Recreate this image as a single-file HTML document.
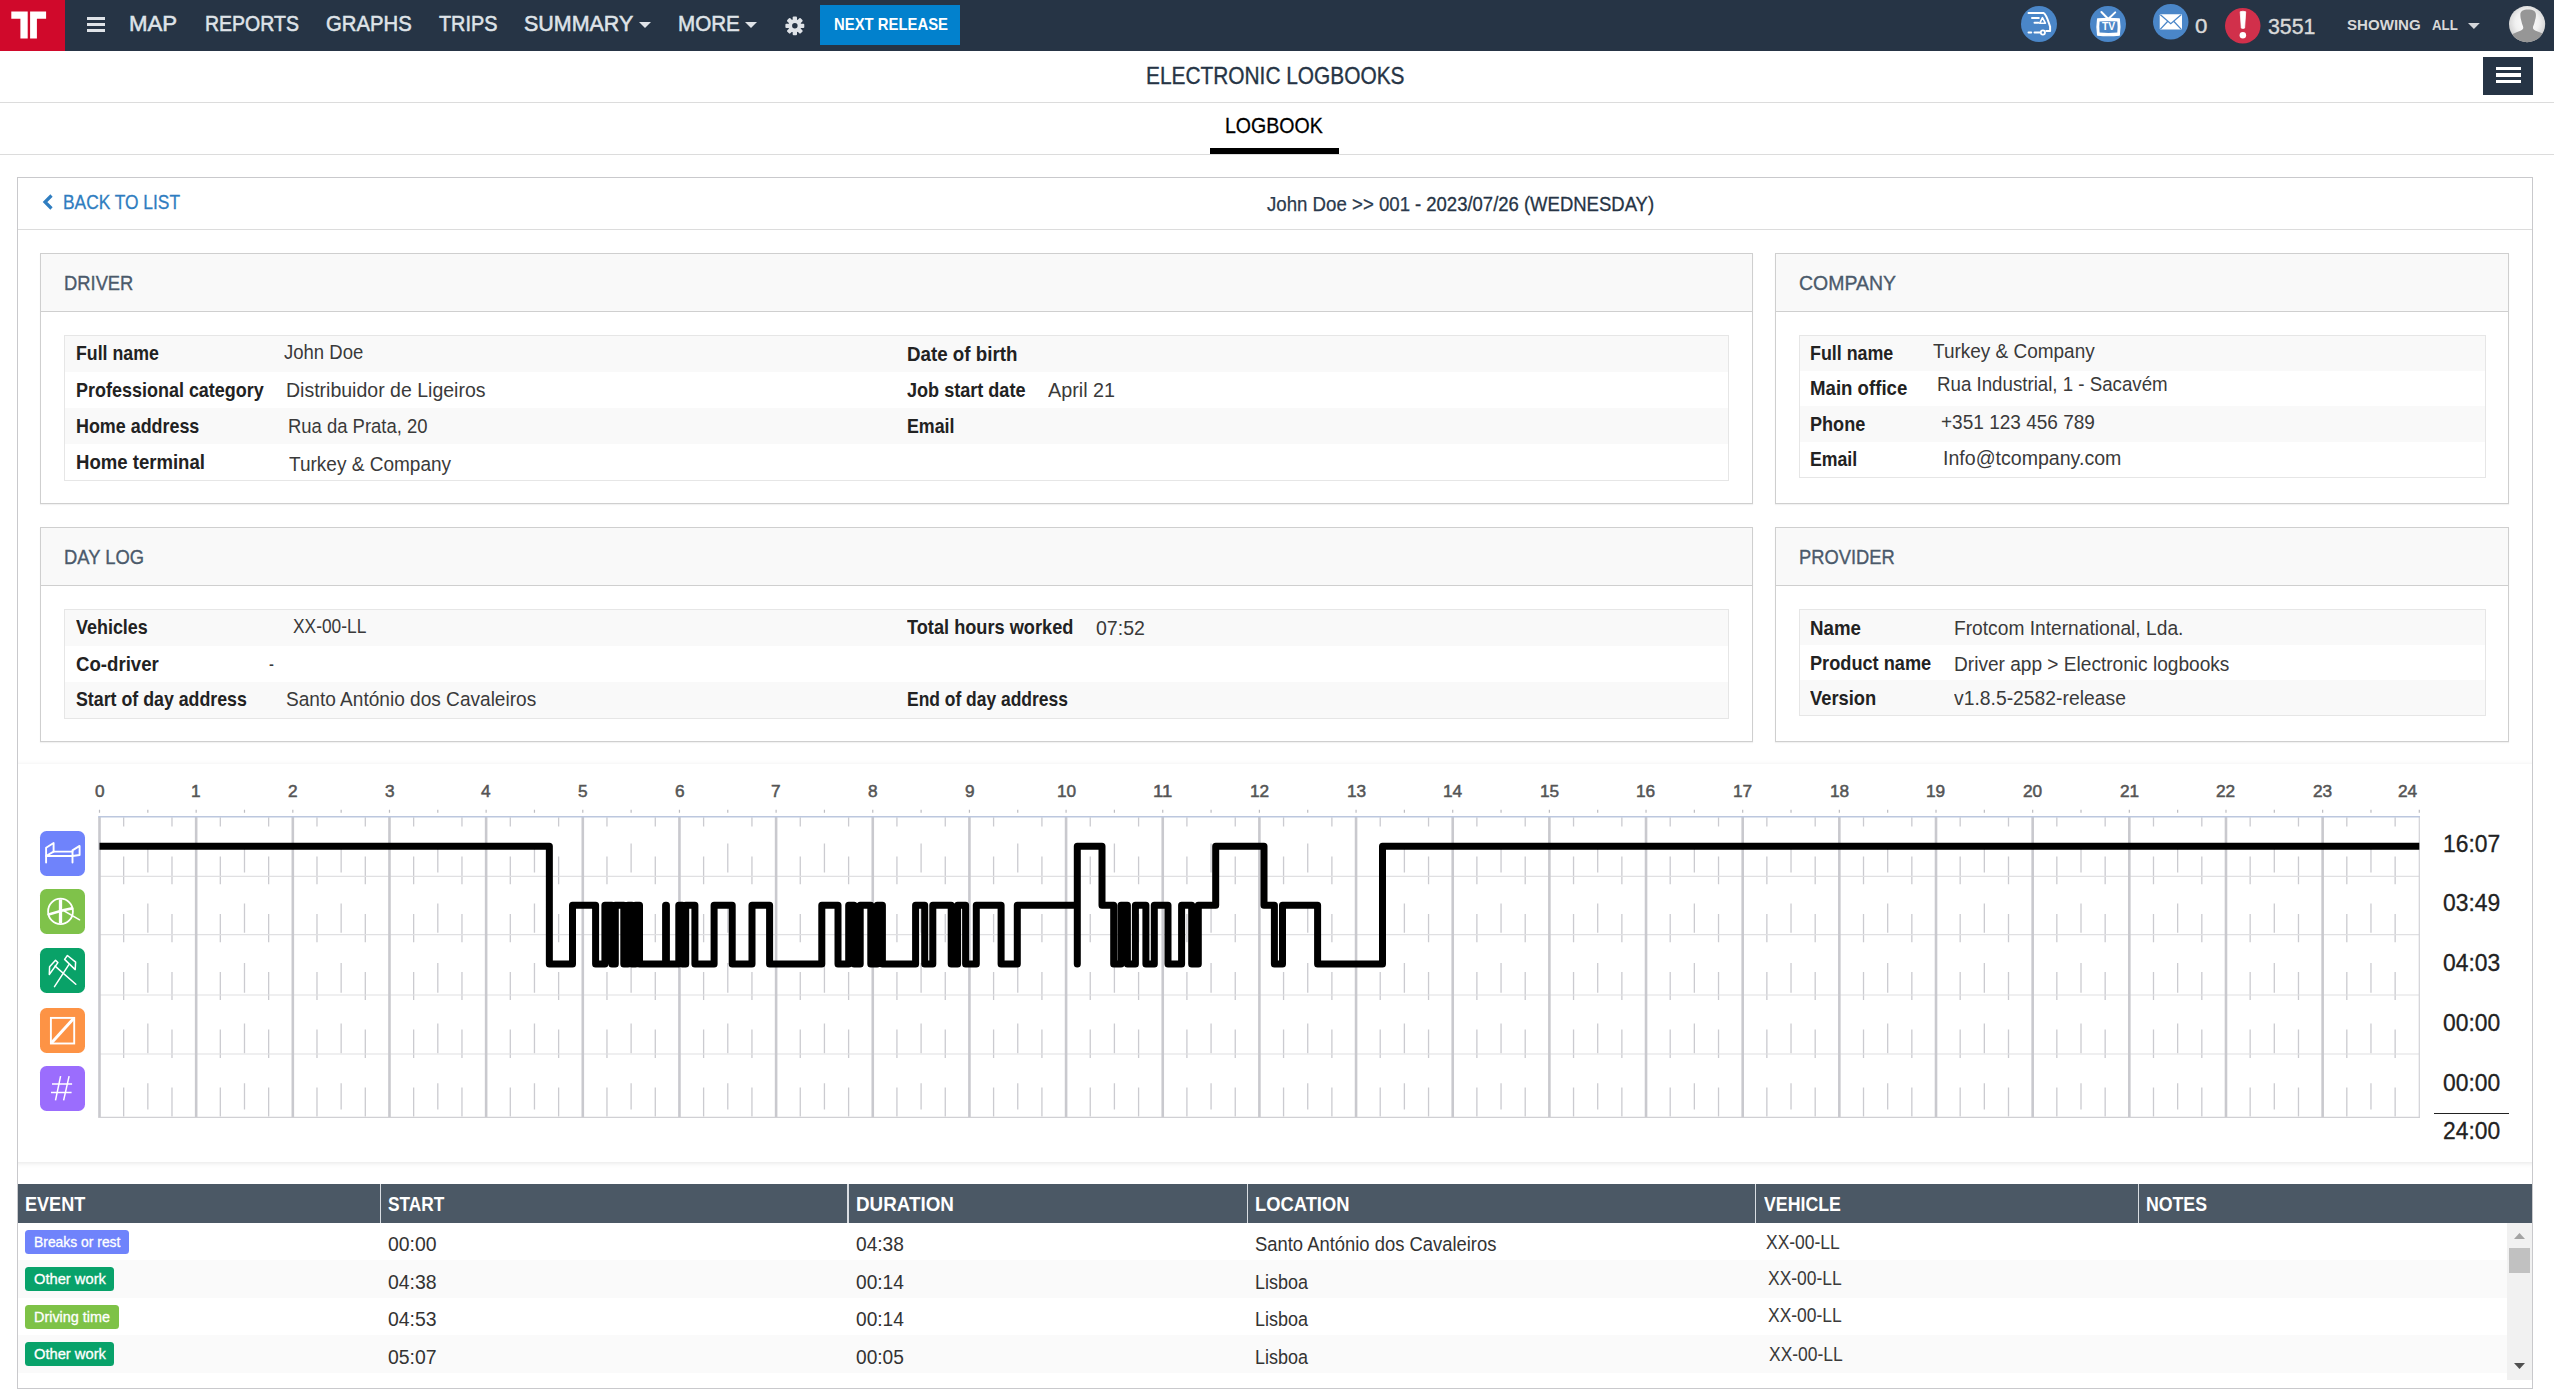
<!DOCTYPE html><html><head><meta charset="utf-8"><title>Electronic Logbooks</title><style>

html,body{margin:0;padding:0;background:#fff;}
body{width:2554px;height:1395px;position:relative;overflow:hidden;font-family:"Liberation Sans",sans-serif;}
.r{position:absolute;box-sizing:border-box;}
.t{position:absolute;white-space:pre;line-height:1;transform-origin:0 0;}
svg{position:absolute;overflow:visible;}

</style></head><body>
<div class="r" style="left:0px;top:0px;width:2554px;height:50.7px;background:#263445;"></div>
<div class="r" style="left:0px;top:0px;width:65.1px;height:50.7px;background:#d0092b;"></div>
<svg style="left:0;top:0" width="65" height="51" viewBox="0 0 65 51"><path d="M11.3 11.5H27.7V38.5H20.4V18.8H11.3ZM30.1 11.5H46.1V18.8H36.9V38.5H30.1Z" fill="#fff"/></svg>
<div class="r" style="left:86.7px;top:17.15px;width:18.6px;height:2.9px;background:#dfe3e8;"></div>
<div class="r" style="left:86.7px;top:23.0px;width:18.6px;height:2.9px;background:#dfe3e8;"></div>
<div class="r" style="left:86.7px;top:29.0px;width:18.6px;height:2.9px;background:#dfe3e8;"></div>
<svg style="left:639px;top:22px" width="12" height="6"><path d="M0 0H12L6 6Z" fill="#dfe3e8"/></svg>
<svg style="left:745px;top:22px" width="12" height="6"><path d="M0 0H12L6 6Z" fill="#dfe3e8"/></svg>
<svg style="left:784.6px;top:15.5px" width="19.7" height="19.7" viewBox="-10 -10 20 20"><g fill="#dfe3e8"><circle r="6.6"/><rect x="-2.2" y="-9.6" width="4.4" height="5" rx="1" transform="rotate(0)"/><rect x="-2.2" y="-9.6" width="4.4" height="5" rx="1" transform="rotate(45)"/><rect x="-2.2" y="-9.6" width="4.4" height="5" rx="1" transform="rotate(90)"/><rect x="-2.2" y="-9.6" width="4.4" height="5" rx="1" transform="rotate(135)"/><rect x="-2.2" y="-9.6" width="4.4" height="5" rx="1" transform="rotate(180)"/><rect x="-2.2" y="-9.6" width="4.4" height="5" rx="1" transform="rotate(225)"/><rect x="-2.2" y="-9.6" width="4.4" height="5" rx="1" transform="rotate(270)"/><rect x="-2.2" y="-9.6" width="4.4" height="5" rx="1" transform="rotate(315)"/></g><circle r="2.8" fill="#263445"/></svg>
<div class="r" style="left:820.2px;top:5.1px;width:139.7px;height:40px;background:#0281cd;"></div>
<svg style="left:2021px;top:5.9px" width="36" height="36" viewBox="0 0 36 36"><circle cx="18" cy="18" r="18" fill="#4a86c8"/>
<g fill="none" stroke="#fff" stroke-width="2" stroke-linecap="round" stroke-linejoin="round">
<path d="M7.5 6.9H22.4C25.5 8.5 27 14.5 29.1 20.6V25H25.3"/><path d="M21.4 11.6L18.8 17.2H24.4Z" stroke-width="1.6"/>
<path d="M11 11.9H17.8M13.5 16.7H17.3"/><path d="M7.5 26.5H10.2M13.5 26.5H19"/></g>
<circle cx="21.9" cy="26.5" r="2.1" fill="#4a86c8" stroke="#fff" stroke-width="1.8"/></svg>
<svg style="left:2090px;top:5.9px" width="36" height="36" viewBox="0 0 36 36"><circle cx="18" cy="18" r="18" fill="#4a86c8"/>
<path d="M11.4 6L18.3 13L25.2 6.4" fill="none" stroke="#fff" stroke-width="2" stroke-linecap="round"/>
<path d="M7.6 12.9Q18.4 11.9 29.3 12.9Q30.6 21 29.3 29.2Q18.4 30.3 7.6 29.2Q6.3 21 7.6 12.9Z" fill="#fff" stroke="#fff" stroke-width="1.2" stroke-linejoin="round"/>
<path d="M9.6 15.6Q18.4 14.9 27.3 15.6Q28 21 27.3 26.5Q18.4 27.3 9.6 26.5Q9 21 9.6 15.6Z" fill="#4a86c8"/>
<text x="18.6" y="24.4" font-family="Liberation Sans, sans-serif" font-weight="700" font-size="10.3" fill="#fff" text-anchor="middle">TV</text></svg>
<svg style="left:2152.5px;top:4px" width="35.5" height="35.5" viewBox="0 0 36 36"><circle cx="18" cy="18" r="18" fill="#4a86c8"/>
<rect x="6.8" y="10.3" width="22.6" height="15.6" rx="1.2" fill="#fff"/>
<path d="M7.5 11L18 20L28.5 11M7.5 25.5L15 17.5M28.5 25.5L21 17.5" fill="none" stroke="#4a86c8" stroke-width="1.3"/></svg>
<svg style="left:2225px;top:8px" width="35.5" height="35.5" viewBox="0 0 36 36"><circle cx="18" cy="18" r="18" fill="#d1304b"/>
<path d="M15.4 3.8Q18.2 2.8 21 3.8L19.9 20.4Q18.2 21.2 16.5 20.4Z" fill="#fff" stroke="#fff" stroke-width="0.8" stroke-linejoin="round"/><circle cx="18.1" cy="27.6" r="3.3" fill="#fff"/></svg>
<svg style="left:2468.2px;top:23px" width="11.8" height="6"><path d="M0 0H11.8L5.9 6Z" fill="#d4d6da"/></svg>
<svg style="left:2508.9px;top:6px" width="36.2" height="36.2" viewBox="0 0 36 36"><defs><clipPath id="av"><circle cx="18" cy="18" r="18"/></clipPath>
<radialGradient id="avg" cx="50%" cy="45%" r="55%"><stop offset="0" stop-color="#ffffff"/><stop offset="0.6" stop-color="#f0f0f0"/><stop offset="1" stop-color="#cfcfcf"/></radialGradient></defs>
<circle cx="18" cy="18" r="18" fill="url(#avg)"/><g clip-path="url(#av)" fill="#969696"><path d="M11.3 9C11.3 5 14 3.6 19 3.6C24 3.6 26.8 5 26.8 9C26.8 12 26 13.5 25.6 15.5C25 18.5 24 19.5 23.8 21.5C23.8 23 24.5 23.8 26.5 24.6C30 26 33 27 36 28.5V38H0V29.5C4 27.5 8 26 11.5 24.6C13.5 23.8 14.2 23 14.2 21.5C14 19.5 13 18.5 12.4 15.5C12 13.5 11.3 12 11.3 9Z"/></g></svg>
<div class="r" style="left:0px;top:102px;width:2554px;height:1px;background:#dcdcdc;"></div>
<div class="r" style="left:2483px;top:57px;width:50px;height:38px;background:#263445;"></div>
<div class="r" style="left:2496px;top:66.5px;width:25px;height:3.6px;background:#fff;"></div>
<div class="r" style="left:2496px;top:73.2px;width:25px;height:3.6px;background:#fff;"></div>
<div class="r" style="left:2496px;top:79.9px;width:25px;height:3.6px;background:#fff;"></div>
<div class="r" style="left:1210px;top:148.3px;width:129.2px;height:5.4px;background:#000;"></div>
<div class="r" style="left:0px;top:154px;width:2554px;height:1px;background:#dcdcdc;"></div>
<div class="r" style="left:17px;top:177px;width:2516px;height:1212px;background:#fff;border:1px solid #c9c9cc;"></div>
<div class="r" style="left:18px;top:229px;width:2514px;height:1px;background:#dcdcdc;"></div>
<svg style="left:42px;top:194px" width="12" height="16" viewBox="0 0 12 16"><path d="M9.5 1.5L3 8L9.5 14.5" fill="none" stroke="#2f7dc0" stroke-width="3.2"/></svg>
<div class="r" style="left:40px;top:253px;width:1713px;height:251px;background:#fff;border:1px solid #cfcfcf;box-shadow:0 1px 1px rgba(0,0,0,.05);"></div>
<div class="r" style="left:41px;top:254px;width:1711px;height:58px;background:#f9f9f9;border-bottom:1px solid #cfcfcf;"></div>
<div class="r" style="left:64px;top:335px;width:1665px;height:145.5px;background:#fff;border:1px solid #e6e6e6;"></div>
<div class="r" style="left:65px;top:336px;width:1663px;height:35.6px;background:#f9f9f9;"></div>
<div class="r" style="left:65px;top:407.90000000000003px;width:1663px;height:36.3px;background:#f9f9f9;"></div>
<div class="r" style="left:1775px;top:253px;width:734px;height:251px;background:#fff;border:1px solid #cfcfcf;box-shadow:0 1px 1px rgba(0,0,0,.05);"></div>
<div class="r" style="left:1776px;top:254px;width:732px;height:58px;background:#f9f9f9;border-bottom:1px solid #cfcfcf;"></div>
<div class="r" style="left:1799px;top:335px;width:686.8000000000002px;height:142.8px;background:#fff;border:1px solid #e6e6e6;"></div>
<div class="r" style="left:1800px;top:336px;width:684.8000000000002px;height:34.7px;background:#f9f9f9;"></div>
<div class="r" style="left:1800px;top:406.4px;width:684.8000000000002px;height:35.8px;background:#f9f9f9;"></div>
<div class="r" style="left:40px;top:527px;width:1713px;height:215px;background:#fff;border:1px solid #cfcfcf;box-shadow:0 1px 1px rgba(0,0,0,.05);"></div>
<div class="r" style="left:41px;top:528px;width:1711px;height:58px;background:#f9f9f9;border-bottom:1px solid #cfcfcf;"></div>
<div class="r" style="left:64px;top:609.2px;width:1665px;height:109.5px;background:#fff;border:1px solid #e6e6e6;"></div>
<div class="r" style="left:65px;top:610.2px;width:1663px;height:35.5px;background:#f9f9f9;"></div>
<div class="r" style="left:65px;top:682.2px;width:1663px;height:35.5px;background:#f9f9f9;"></div>
<div class="r" style="left:1775px;top:527px;width:734px;height:215px;background:#fff;border:1px solid #cfcfcf;box-shadow:0 1px 1px rgba(0,0,0,.05);"></div>
<div class="r" style="left:1776px;top:528px;width:732px;height:58px;background:#f9f9f9;border-bottom:1px solid #cfcfcf;"></div>
<div class="r" style="left:1799px;top:609px;width:686.8000000000002px;height:107.30000000000001px;background:#fff;border:1px solid #e6e6e6;"></div>
<div class="r" style="left:1800px;top:610px;width:684.8000000000002px;height:34.7px;background:#f9f9f9;"></div>
<div class="r" style="left:1800px;top:680.4000000000001px;width:684.8000000000002px;height:34.9px;background:#f9f9f9;"></div>
<div class="r" style="left:18px;top:745px;width:2514px;height:436px;overflow:hidden"><div class="r" style="left:-10px;top:19px;width:2534px;height:398px;background:#fff;box-shadow:0 1px 5px rgba(0,0,0,.10)"></div></div>
<svg style="left:0;top:0" width="2554" height="1395" viewBox="0 0 2554 1395"><path d="M99.50 809.8V812.8M147.83 809.8V812.8M196.16 809.8V812.8M244.49 809.8V812.8M292.82 809.8V812.8M341.15 809.8V812.8M389.48 809.8V812.8M437.80 809.8V812.8M486.13 809.8V812.8M534.46 809.8V812.8M582.79 809.8V812.8M631.12 809.8V812.8M679.45 809.8V812.8M727.78 809.8V812.8M776.11 809.8V812.8M824.44 809.8V812.8M872.77 809.8V812.8M921.10 809.8V812.8M969.43 809.8V812.8M1017.75 809.8V812.8M1066.08 809.8V812.8M1114.41 809.8V812.8M1162.74 809.8V812.8M1211.07 809.8V812.8M1259.40 809.8V812.8M1307.73 809.8V812.8M1356.06 809.8V812.8M1404.39 809.8V812.8M1452.72 809.8V812.8M1501.05 809.8V812.8M1549.38 809.8V812.8M1597.70 809.8V812.8M1646.03 809.8V812.8M1694.36 809.8V812.8M1742.69 809.8V812.8M1791.02 809.8V812.8M1839.35 809.8V812.8M1887.68 809.8V812.8M1936.01 809.8V812.8M1984.34 809.8V812.8M2032.67 809.8V812.8M2081.00 809.8V812.8M2129.33 809.8V812.8M2177.65 809.8V812.8M2225.98 809.8V812.8M2274.31 809.8V812.8M2322.64 809.8V812.8M2370.97 809.8V812.8M2419.30 809.8V812.8" stroke="#bdbdc2" stroke-width="1.2" fill="none"/><path d="M123.66 817.2V826.4M123.66 856.5V884.2M123.66 914.1V942.2M123.66 971.9V999.9M123.66 1029.5V1057.9M123.66 1087.6V1116.6M171.99 817.2V826.4M171.99 856.5V884.2M171.99 914.1V942.2M171.99 971.9V999.9M171.99 1029.5V1057.9M171.99 1087.6V1116.6M220.32 817.2V826.4M220.32 856.5V884.2M220.32 914.1V942.2M220.32 971.9V999.9M220.32 1029.5V1057.9M220.32 1087.6V1116.6M268.65 817.2V826.4M268.65 856.5V884.2M268.65 914.1V942.2M268.65 971.9V999.9M268.65 1029.5V1057.9M268.65 1087.6V1116.6M316.98 817.2V826.4M316.98 856.5V884.2M316.98 914.1V942.2M316.98 971.9V999.9M316.98 1029.5V1057.9M316.98 1087.6V1116.6M365.31 817.2V826.4M365.31 856.5V884.2M365.31 914.1V942.2M365.31 971.9V999.9M365.31 1029.5V1057.9M365.31 1087.6V1116.6M413.64 817.2V826.4M413.64 856.5V884.2M413.64 914.1V942.2M413.64 971.9V999.9M413.64 1029.5V1057.9M413.64 1087.6V1116.6M461.97 817.2V826.4M461.97 856.5V884.2M461.97 914.1V942.2M461.97 971.9V999.9M461.97 1029.5V1057.9M461.97 1087.6V1116.6M510.30 817.2V826.4M510.30 856.5V884.2M510.30 914.1V942.2M510.30 971.9V999.9M510.30 1029.5V1057.9M510.30 1087.6V1116.6M558.63 817.2V826.4M558.63 856.5V884.2M558.63 914.1V942.2M558.63 971.9V999.9M558.63 1029.5V1057.9M558.63 1087.6V1116.6M606.96 817.2V826.4M606.96 856.5V884.2M606.96 914.1V942.2M606.96 971.9V999.9M606.96 1029.5V1057.9M606.96 1087.6V1116.6M655.29 817.2V826.4M655.29 856.5V884.2M655.29 914.1V942.2M655.29 971.9V999.9M655.29 1029.5V1057.9M655.29 1087.6V1116.6M703.61 817.2V826.4M703.61 856.5V884.2M703.61 914.1V942.2M703.61 971.9V999.9M703.61 1029.5V1057.9M703.61 1087.6V1116.6M751.94 817.2V826.4M751.94 856.5V884.2M751.94 914.1V942.2M751.94 971.9V999.9M751.94 1029.5V1057.9M751.94 1087.6V1116.6M800.27 817.2V826.4M800.27 856.5V884.2M800.27 914.1V942.2M800.27 971.9V999.9M800.27 1029.5V1057.9M800.27 1087.6V1116.6M848.60 817.2V826.4M848.60 856.5V884.2M848.60 914.1V942.2M848.60 971.9V999.9M848.60 1029.5V1057.9M848.60 1087.6V1116.6M896.93 817.2V826.4M896.93 856.5V884.2M896.93 914.1V942.2M896.93 971.9V999.9M896.93 1029.5V1057.9M896.93 1087.6V1116.6M945.26 817.2V826.4M945.26 856.5V884.2M945.26 914.1V942.2M945.26 971.9V999.9M945.26 1029.5V1057.9M945.26 1087.6V1116.6M993.59 817.2V826.4M993.59 856.5V884.2M993.59 914.1V942.2M993.59 971.9V999.9M993.59 1029.5V1057.9M993.59 1087.6V1116.6M1041.92 817.2V826.4M1041.92 856.5V884.2M1041.92 914.1V942.2M1041.92 971.9V999.9M1041.92 1029.5V1057.9M1041.92 1087.6V1116.6M1090.25 817.2V826.4M1090.25 856.5V884.2M1090.25 914.1V942.2M1090.25 971.9V999.9M1090.25 1029.5V1057.9M1090.25 1087.6V1116.6M1138.58 817.2V826.4M1138.58 856.5V884.2M1138.58 914.1V942.2M1138.58 971.9V999.9M1138.58 1029.5V1057.9M1138.58 1087.6V1116.6M1186.91 817.2V826.4M1186.91 856.5V884.2M1186.91 914.1V942.2M1186.91 971.9V999.9M1186.91 1029.5V1057.9M1186.91 1087.6V1116.6M1235.24 817.2V826.4M1235.24 856.5V884.2M1235.24 914.1V942.2M1235.24 971.9V999.9M1235.24 1029.5V1057.9M1235.24 1087.6V1116.6M1283.56 817.2V826.4M1283.56 856.5V884.2M1283.56 914.1V942.2M1283.56 971.9V999.9M1283.56 1029.5V1057.9M1283.56 1087.6V1116.6M1331.89 817.2V826.4M1331.89 856.5V884.2M1331.89 914.1V942.2M1331.89 971.9V999.9M1331.89 1029.5V1057.9M1331.89 1087.6V1116.6M1380.22 817.2V826.4M1380.22 856.5V884.2M1380.22 914.1V942.2M1380.22 971.9V999.9M1380.22 1029.5V1057.9M1380.22 1087.6V1116.6M1428.55 817.2V826.4M1428.55 856.5V884.2M1428.55 914.1V942.2M1428.55 971.9V999.9M1428.55 1029.5V1057.9M1428.55 1087.6V1116.6M1476.88 817.2V826.4M1476.88 856.5V884.2M1476.88 914.1V942.2M1476.88 971.9V999.9M1476.88 1029.5V1057.9M1476.88 1087.6V1116.6M1525.21 817.2V826.4M1525.21 856.5V884.2M1525.21 914.1V942.2M1525.21 971.9V999.9M1525.21 1029.5V1057.9M1525.21 1087.6V1116.6M1573.54 817.2V826.4M1573.54 856.5V884.2M1573.54 914.1V942.2M1573.54 971.9V999.9M1573.54 1029.5V1057.9M1573.54 1087.6V1116.6M1621.87 817.2V826.4M1621.87 856.5V884.2M1621.87 914.1V942.2M1621.87 971.9V999.9M1621.87 1029.5V1057.9M1621.87 1087.6V1116.6M1670.20 817.2V826.4M1670.20 856.5V884.2M1670.20 914.1V942.2M1670.20 971.9V999.9M1670.20 1029.5V1057.9M1670.20 1087.6V1116.6M1718.53 817.2V826.4M1718.53 856.5V884.2M1718.53 914.1V942.2M1718.53 971.9V999.9M1718.53 1029.5V1057.9M1718.53 1087.6V1116.6M1766.86 817.2V826.4M1766.86 856.5V884.2M1766.86 914.1V942.2M1766.86 971.9V999.9M1766.86 1029.5V1057.9M1766.86 1087.6V1116.6M1815.19 817.2V826.4M1815.19 856.5V884.2M1815.19 914.1V942.2M1815.19 971.9V999.9M1815.19 1029.5V1057.9M1815.19 1087.6V1116.6M1863.51 817.2V826.4M1863.51 856.5V884.2M1863.51 914.1V942.2M1863.51 971.9V999.9M1863.51 1029.5V1057.9M1863.51 1087.6V1116.6M1911.84 817.2V826.4M1911.84 856.5V884.2M1911.84 914.1V942.2M1911.84 971.9V999.9M1911.84 1029.5V1057.9M1911.84 1087.6V1116.6M1960.17 817.2V826.4M1960.17 856.5V884.2M1960.17 914.1V942.2M1960.17 971.9V999.9M1960.17 1029.5V1057.9M1960.17 1087.6V1116.6M2008.50 817.2V826.4M2008.50 856.5V884.2M2008.50 914.1V942.2M2008.50 971.9V999.9M2008.50 1029.5V1057.9M2008.50 1087.6V1116.6M2056.83 817.2V826.4M2056.83 856.5V884.2M2056.83 914.1V942.2M2056.83 971.9V999.9M2056.83 1029.5V1057.9M2056.83 1087.6V1116.6M2105.16 817.2V826.4M2105.16 856.5V884.2M2105.16 914.1V942.2M2105.16 971.9V999.9M2105.16 1029.5V1057.9M2105.16 1087.6V1116.6M2153.49 817.2V826.4M2153.49 856.5V884.2M2153.49 914.1V942.2M2153.49 971.9V999.9M2153.49 1029.5V1057.9M2153.49 1087.6V1116.6M2201.82 817.2V826.4M2201.82 856.5V884.2M2201.82 914.1V942.2M2201.82 971.9V999.9M2201.82 1029.5V1057.9M2201.82 1087.6V1116.6M2250.15 817.2V826.4M2250.15 856.5V884.2M2250.15 914.1V942.2M2250.15 971.9V999.9M2250.15 1029.5V1057.9M2250.15 1087.6V1116.6M2298.48 817.2V826.4M2298.48 856.5V884.2M2298.48 914.1V942.2M2298.48 971.9V999.9M2298.48 1029.5V1057.9M2298.48 1087.6V1116.6M2346.81 817.2V826.4M2346.81 856.5V884.2M2346.81 914.1V942.2M2346.81 971.9V999.9M2346.81 1029.5V1057.9M2346.81 1087.6V1116.6M2395.14 817.2V826.4M2395.14 856.5V884.2M2395.14 914.1V942.2M2395.14 971.9V999.9M2395.14 1029.5V1057.9M2395.14 1087.6V1116.6" stroke="#cbcbd0" stroke-width="1.3" fill="none"/><path d="M147.83 843.5V872.6M147.83 903.5V932.8M147.83 963.1V992.7M147.83 1023.5V1053.2M147.83 1083.2V1109.6M244.49 843.5V872.6M244.49 903.5V932.8M244.49 963.1V992.7M244.49 1023.5V1053.2M244.49 1083.2V1109.6M341.15 843.5V872.6M341.15 903.5V932.8M341.15 963.1V992.7M341.15 1023.5V1053.2M341.15 1083.2V1109.6M437.80 843.5V872.6M437.80 903.5V932.8M437.80 963.1V992.7M437.80 1023.5V1053.2M437.80 1083.2V1109.6M534.46 843.5V872.6M534.46 903.5V932.8M534.46 963.1V992.7M534.46 1023.5V1053.2M534.46 1083.2V1109.6M631.12 843.5V872.6M631.12 903.5V932.8M631.12 963.1V992.7M631.12 1023.5V1053.2M631.12 1083.2V1109.6M727.78 843.5V872.6M727.78 903.5V932.8M727.78 963.1V992.7M727.78 1023.5V1053.2M727.78 1083.2V1109.6M824.44 843.5V872.6M824.44 903.5V932.8M824.44 963.1V992.7M824.44 1023.5V1053.2M824.44 1083.2V1109.6M921.10 843.5V872.6M921.10 903.5V932.8M921.10 963.1V992.7M921.10 1023.5V1053.2M921.10 1083.2V1109.6M1017.75 843.5V872.6M1017.75 903.5V932.8M1017.75 963.1V992.7M1017.75 1023.5V1053.2M1017.75 1083.2V1109.6M1114.41 843.5V872.6M1114.41 903.5V932.8M1114.41 963.1V992.7M1114.41 1023.5V1053.2M1114.41 1083.2V1109.6M1211.07 843.5V872.6M1211.07 903.5V932.8M1211.07 963.1V992.7M1211.07 1023.5V1053.2M1211.07 1083.2V1109.6M1307.73 843.5V872.6M1307.73 903.5V932.8M1307.73 963.1V992.7M1307.73 1023.5V1053.2M1307.73 1083.2V1109.6M1404.39 843.5V872.6M1404.39 903.5V932.8M1404.39 963.1V992.7M1404.39 1023.5V1053.2M1404.39 1083.2V1109.6M1501.05 843.5V872.6M1501.05 903.5V932.8M1501.05 963.1V992.7M1501.05 1023.5V1053.2M1501.05 1083.2V1109.6M1597.70 843.5V872.6M1597.70 903.5V932.8M1597.70 963.1V992.7M1597.70 1023.5V1053.2M1597.70 1083.2V1109.6M1694.36 843.5V872.6M1694.36 903.5V932.8M1694.36 963.1V992.7M1694.36 1023.5V1053.2M1694.36 1083.2V1109.6M1791.02 843.5V872.6M1791.02 903.5V932.8M1791.02 963.1V992.7M1791.02 1023.5V1053.2M1791.02 1083.2V1109.6M1887.68 843.5V872.6M1887.68 903.5V932.8M1887.68 963.1V992.7M1887.68 1023.5V1053.2M1887.68 1083.2V1109.6M1984.34 843.5V872.6M1984.34 903.5V932.8M1984.34 963.1V992.7M1984.34 1023.5V1053.2M1984.34 1083.2V1109.6M2081.00 843.5V872.6M2081.00 903.5V932.8M2081.00 963.1V992.7M2081.00 1023.5V1053.2M2081.00 1083.2V1109.6M2177.65 843.5V872.6M2177.65 903.5V932.8M2177.65 963.1V992.7M2177.65 1023.5V1053.2M2177.65 1083.2V1109.6M2274.31 843.5V872.6M2274.31 903.5V932.8M2274.31 963.1V992.7M2274.31 1023.5V1053.2M2274.31 1083.2V1109.6M2370.97 843.5V872.6M2370.97 903.5V932.8M2370.97 963.1V992.7M2370.97 1023.5V1053.2M2370.97 1083.2V1109.6" stroke="#cbcbd0" stroke-width="1.3" fill="none"/><path d="M99.5 876.4H2419.3M99.5 934.7H2419.3M99.5 995.0H2419.3M99.5 1054.0H2419.3" stroke="#e0e0e2" stroke-width="1.2" fill="none"/><path d="M99.50 816.7V1117.3M196.16 816.7V1117.3M292.82 816.7V1117.3M389.48 816.7V1117.3M486.13 816.7V1117.3M582.79 816.7V1117.3M679.45 816.7V1117.3M776.11 816.7V1117.3M872.77 816.7V1117.3M969.43 816.7V1117.3M1066.08 816.7V1117.3M1162.74 816.7V1117.3M1259.40 816.7V1117.3M1356.06 816.7V1117.3M1452.72 816.7V1117.3M1549.38 816.7V1117.3M1646.03 816.7V1117.3M1742.69 816.7V1117.3M1839.35 816.7V1117.3M1936.01 816.7V1117.3M2032.67 816.7V1117.3M2129.33 816.7V1117.3M2225.98 816.7V1117.3M2322.64 816.7V1117.3" stroke="#c9c9ce" stroke-width="2.6" fill="none"/><path d="M2419.3 816.7V1117.3" stroke="#d2d2d6" stroke-width="1.2" fill="none"/><path d="M98.2 816.7H2420" stroke="#bcc7de" stroke-width="1.6" fill="none"/><path d="M98.2 1117.3H2420" stroke="#d0d0d4" stroke-width="1.3" fill="none"/><path d="M99.5 846.3H549.35V964.0H572.5V905.3H595.6V964.0H604.9V905.3H611.9V964.0H615.3V905.3H623.8V964.0H628.0V905.3H632.0V964.0H635.5V905.3H639.5V964.0H665.6V905.3H666.4V964.0H678.8V905.3H682.2V964.0H685.7V905.3H694.9V964.0H714.1V905.3H732.2V964.0H752.0V905.3H769.6V964.0H821.8V905.3H838.0V964.0H848.7V905.3H854.1V964.0H860.2V905.3H870.8V964.0H877.2V905.3H882.4V964.0H915.6V905.3H924.7V964.0H932.8V905.3H951.2V964.0H957.6V905.3H965.6V964.0H976.3V905.3H1001.1V964.0H1017.3V905.3H1077.3V964.0H1077.3V846.3H1102.0V905.3H1113.7V964.0H1121.0V905.3H1127.4V964.0H1135.4V905.3H1145.9V964.0H1154.3V905.3H1168.0V964.0H1181.6V905.3H1191.7V964.0H1198.3V905.3H1215.7V846.3H1264.0V905.3H1274.4V964.0H1282.5V905.3H1317.6V964.0H1382.5V846.3H2419.3" stroke="#000" stroke-width="7" fill="none" stroke-linejoin="round"/></svg>
<div class="r" style="left:2433.8px;top:1112.7px;width:75.5px;height:1.2px;background:#222;"></div>
<svg style="left:40px;top:831.3px" width="45" height="45" viewBox="0 0 45 45"><rect width="45" height="45" rx="6.5" fill="#6f83fb"/><g fill="none" stroke="#fff" stroke-width="1.5" stroke-linejoin="round" stroke-linecap="round"><g stroke-width="1.9"><path d="M6.1 31.6V16.8L13.6 12V20.6L6.1 25"/><path d="M13.6 20.6H32.5M6.1 25H32.5"/><path d="M32.5 31.6V19.4L39.6 14.9V24L32.5 25"/></g></g></svg>
<svg style="left:40px;top:888.9px" width="45" height="45" viewBox="0 0 45 45"><rect width="45" height="45" rx="6.5" fill="#7fc24a"/><g fill="none" stroke="#fff" stroke-width="1.5" stroke-linejoin="round" stroke-linecap="round"><ellipse cx="20.5" cy="22.4" rx="12.4" ry="12.8" stroke-width="1.8"/><path d="M20.5 10.4V34.4" stroke-width="3.3" stroke-linecap="butt"/><path d="M8.6 25.4L24 21L32.2 19.4" stroke-width="2.6"/><path d="M23.5 21.5L39.6 30.8" stroke-width="1.5"/></g></svg>
<svg style="left:40px;top:948.1px" width="45" height="45" viewBox="0 0 45 45"><rect width="45" height="45" rx="6.5" fill="#09a268"/><g fill="none" stroke="#fff" stroke-width="1.5" stroke-linejoin="round" stroke-linecap="round"><path d="M14.5 38.7L28.7 16.8M35.8 36.2L15.1 18.1"/><path d="M24.6 11.4L27.4 7.5L35.6 14.2L35.2 21.6Z"/><path d="M9.3 26.5L9.6 18.7L15.5 12.3L17.9 14.6Z"/></g></svg>
<svg style="left:40px;top:1008.2px" width="45" height="45" viewBox="0 0 45 45"><rect width="45" height="45" rx="6.5" fill="#fd9345"/><g fill="none" stroke="#fff" stroke-width="1.5" stroke-linejoin="round" stroke-linecap="round"><rect x="10.9" y="9.9" width="23.3" height="25.6" stroke-width="1.9" stroke-linejoin="miter"/><path d="M11.6 34.8L33.6 10.6" stroke-width="3" stroke-linecap="butt"/></g></svg>
<svg style="left:40px;top:1066.0px" width="45" height="45" viewBox="0 0 45 45"><rect width="45" height="45" rx="6.5" fill="#9b6dfd"/><g fill="none" stroke="#fff" stroke-width="1.5" stroke-linejoin="round" stroke-linecap="round"><path d="M12 17.9H32.1M11 26.4H31.6M20.6 10.1L15.5 34.4M29.1 10.1L23.6 34.4" stroke-linecap="butt"/></g></svg>
<div class="r" style="left:18px;top:1184.2px;width:2514px;height:38.8px;background:#4b5865;"></div>
<div class="r" style="left:379.9px;top:1184.2px;width:1.3px;height:38.8px;background:#d9dde2;"></div>
<div class="r" style="left:847.4px;top:1184.2px;width:1.3px;height:38.8px;background:#d9dde2;"></div>
<div class="r" style="left:1246.9px;top:1184.2px;width:1.3px;height:38.8px;background:#d9dde2;"></div>
<div class="r" style="left:1754.5px;top:1184.2px;width:1.3px;height:38.8px;background:#d9dde2;"></div>
<div class="r" style="left:2137.5px;top:1184.2px;width:1.3px;height:38.8px;background:#d9dde2;"></div>
<div class="r" style="left:18px;top:1260px;width:2489px;height:38px;background:#fafafa;"></div>
<div class="r" style="left:18px;top:1335px;width:2489px;height:37.8px;background:#fafafa;"></div>
<div class="r" style="left:25px;top:1230.3px;width:104px;height:23.7px;background:#6f83fb;border-radius:3.5px;"></div>
<div class="r" style="left:25px;top:1267.3px;width:88.8px;height:23.7px;background:#08a26a;border-radius:3.5px;"></div>
<div class="r" style="left:25px;top:1305px;width:93.7px;height:23.7px;background:#7ec247;border-radius:3.5px;"></div>
<div class="r" style="left:25px;top:1342.2px;width:88.8px;height:23.7px;background:#08a26a;border-radius:3.5px;"></div>
<div class="r" style="left:2507px;top:1223px;width:25px;height:157px;background:#f1f1f1;"></div>
<div class="r" style="left:2509.4px;top:1248px;width:20.4px;height:24.6px;background:#c1c1c1;"></div>
<svg style="left:2513.5px;top:1232.5px" width="11" height="6"><path d="M0 6H11L5.5 0Z" fill="#a3a3a3"/></svg>
<svg style="left:2513.5px;top:1363px" width="11" height="6"><path d="M0 0H11L5.5 6Z" fill="#505050"/></svg>
<span class="t" style="left:129.2px;top:12.8px;font-size:22px;-webkit-text-stroke:0.55px #dfe3e8;color:#dfe3e8;transform:scaleX(1.0107);">MAP</span>
<span class="t" style="left:204.8px;top:12.8px;font-size:22px;-webkit-text-stroke:0.55px #dfe3e8;color:#dfe3e8;transform:scaleX(0.8862);">REPORTS</span>
<span class="t" style="left:325.8px;top:12.8px;font-size:22px;-webkit-text-stroke:0.55px #dfe3e8;color:#dfe3e8;transform:scaleX(0.9223);">GRAPHS</span>
<span class="t" style="left:438.9px;top:12.8px;font-size:22px;-webkit-text-stroke:0.55px #dfe3e8;color:#dfe3e8;transform:scaleX(0.9013);">TRIPS</span>
<span class="t" style="left:524.3px;top:12.8px;font-size:22px;-webkit-text-stroke:0.55px #dfe3e8;color:#dfe3e8;transform:scaleX(0.9745);">SUMMARY</span>
<span class="t" style="left:677.8px;top:12.8px;font-size:22px;-webkit-text-stroke:0.55px #dfe3e8;color:#dfe3e8;transform:scaleX(0.9364);">MORE</span>
<span class="t" style="left:833.6px;top:15.7px;font-size:17px;font-weight:700;color:#fff;transform:scaleX(0.8745);">NEXT RELEASE</span>
<span class="t" style="left:2194.8px;top:15.0px;font-size:21px;-webkit-text-stroke:0.4px #d9d9d9;color:#d9d9d9;transform:scaleX(1.0610);">0</span>
<span class="t" style="left:2267.6px;top:16.4px;font-size:22px;-webkit-text-stroke:0.4px #d9d9d9;color:#d9d9d9;transform:scaleX(0.9703);">3551</span>
<span class="t" style="left:2347.1px;top:17.3px;font-size:15.2px;font-weight:700;color:#d9d9d9;transform:scaleX(0.9926);">SHOWING</span>
<span class="t" style="left:2431.8px;top:17.3px;font-size:15.2px;font-weight:700;color:#d9d9d9;transform:scaleX(0.8737);">ALL</span>
<span class="t" style="left:1145.7px;top:63.5px;font-size:24px;-webkit-text-stroke:0.35px #263445;color:#263445;transform:scaleX(0.8692);">ELECTRONIC LOGBOOKS</span>
<span class="t" style="left:1225.3px;top:115.2px;font-size:22.5px;-webkit-text-stroke:0.3px #000;color:#000;transform:scaleX(0.8690);">LOGBOOK</span>
<span class="t" style="left:62.7px;top:191.7px;font-size:20.5px;-webkit-text-stroke:0.3px #2f7dc0;color:#2f7dc0;transform:scaleX(0.8463);">BACK TO LIST</span>
<span class="t" style="left:1266.7px;top:193.7px;font-size:20.5px;-webkit-text-stroke:0.25px #2b3a4d;color:#2b3a4d;transform:scaleX(0.9097);">John Doe &gt;&gt; 001</span>
<span class="t" style="left:1415.4px;top:193.7px;font-size:20.5px;-webkit-text-stroke:0.3px #263445;color:#263445;transform:scaleX(0.9019);">- 2023/07/26 (WEDNESDAY)</span>
<span class="t" style="left:63.8px;top:272.5px;font-size:20.5px;-webkit-text-stroke:0.35px #4b5a6b;color:#4b5a6b;transform:scaleX(0.8958);">DRIVER</span>
<span class="t" style="left:75.8px;top:343.3px;font-size:20.8px;font-weight:700;color:#222;transform:scaleX(0.8529);">Full name</span>
<span class="t" style="left:284.0px;top:342.4px;font-size:20.5px;color:#3a3a3a;transform:scaleX(0.9035);">John Doe</span>
<span class="t" style="left:75.8px;top:379.5px;font-size:20.8px;font-weight:700;color:#222;transform:scaleX(0.8643);">Professional category</span>
<span class="t" style="left:286.1px;top:380.0px;font-size:20.5px;color:#3a3a3a;transform:scaleX(0.9516);">Distribuidor de Ligeiros</span>
<span class="t" style="left:75.8px;top:415.5px;font-size:20.8px;font-weight:700;color:#222;transform:scaleX(0.8603);">Home address</span>
<span class="t" style="left:287.9px;top:416.2px;font-size:20.5px;color:#3a3a3a;transform:scaleX(0.9000);">Rua da Prata, 20</span>
<span class="t" style="left:75.8px;top:451.5px;font-size:20.8px;font-weight:700;color:#222;transform:scaleX(0.8922);">Home terminal</span>
<span class="t" style="left:288.9px;top:454.0px;font-size:20.5px;color:#3a3a3a;transform:scaleX(0.9279);">Turkey &amp; Company</span>
<span class="t" style="left:907.1px;top:343.6px;font-size:20.8px;font-weight:700;color:#222;transform:scaleX(0.9015);">Date of birth</span>
<span class="t" style="left:907.1px;top:379.7px;font-size:20.8px;font-weight:700;color:#222;transform:scaleX(0.8689);">Job start date</span>
<span class="t" style="left:1047.7px;top:379.9px;font-size:20.5px;color:#3a3a3a;transform:scaleX(0.9638);">April 21</span>
<span class="t" style="left:907.1px;top:415.5px;font-size:20.8px;font-weight:700;color:#222;transform:scaleX(0.8559);">Email</span>
<span class="t" style="left:1798.9px;top:272.5px;font-size:20.5px;-webkit-text-stroke:0.35px #4b5a6b;color:#4b5a6b;transform:scaleX(0.9497);">COMPANY</span>
<span class="t" style="left:1810.4px;top:343.0px;font-size:20.8px;font-weight:700;color:#222;transform:scaleX(0.8581);">Full name</span>
<span class="t" style="left:1932.5px;top:341.0px;font-size:20.5px;color:#3a3a3a;transform:scaleX(0.9256);">Turkey &amp; Company</span>
<span class="t" style="left:1810.4px;top:378.1px;font-size:20.8px;font-weight:700;color:#222;transform:scaleX(0.8957);">Main office</span>
<span class="t" style="left:1936.6px;top:374.3px;font-size:20.5px;color:#3a3a3a;transform:scaleX(0.9120);">Rua Industrial, 1 - Sacavém</span>
<span class="t" style="left:1810.4px;top:413.9px;font-size:20.8px;font-weight:700;color:#222;transform:scaleX(0.8700);">Phone</span>
<span class="t" style="left:1941.2px;top:411.6px;font-size:20.5px;color:#3a3a3a;transform:scaleX(0.9278);">+351 123 456 789</span>
<span class="t" style="left:1810.4px;top:449.3px;font-size:20.8px;font-weight:700;color:#222;transform:scaleX(0.8505);">Email</span>
<span class="t" style="left:1942.8px;top:448.2px;font-size:20.5px;color:#3a3a3a;transform:scaleX(0.9550);">Info@tcompany.com</span>
<span class="t" style="left:63.8px;top:546.5px;font-size:20.5px;-webkit-text-stroke:0.35px #4b5a6b;color:#4b5a6b;transform:scaleX(0.8964);">DAY LOG</span>
<span class="t" style="left:75.8px;top:616.8px;font-size:20.8px;font-weight:700;color:#222;transform:scaleX(0.8625);">Vehicles</span>
<span class="t" style="left:292.5px;top:616.0px;font-size:20.5px;color:#3a3a3a;transform:scaleX(0.8463);">XX-00-LL</span>
<span class="t" style="left:75.8px;top:653.5px;font-size:20.8px;font-weight:700;color:#222;transform:scaleX(0.8956);">Co-driver</span>
<span class="t" style="left:269.2px;top:653.7px;font-size:20.5px;color:#3a3a3a;transform:scaleX(0.7176);">-</span>
<span class="t" style="left:75.8px;top:689.1px;font-size:20.8px;font-weight:700;color:#222;transform:scaleX(0.8547);">Start of day address</span>
<span class="t" style="left:286.1px;top:689.3px;font-size:20.5px;color:#3a3a3a;transform:scaleX(0.9303);">Santo António dos Cavaleiros</span>
<span class="t" style="left:907.1px;top:617.3px;font-size:20.8px;font-weight:700;color:#222;transform:scaleX(0.8745);">Total hours worked</span>
<span class="t" style="left:1095.6px;top:617.5px;font-size:20.5px;color:#3a3a3a;transform:scaleX(0.9530);">07:52</span>
<span class="t" style="left:907.1px;top:689.0px;font-size:20.8px;font-weight:700;color:#222;transform:scaleX(0.8387);">End of day address</span>
<span class="t" style="left:1798.9px;top:546.5px;font-size:20.5px;-webkit-text-stroke:0.35px #4b5a6b;color:#4b5a6b;transform:scaleX(0.8937);">PROVIDER</span>
<span class="t" style="left:1810.4px;top:617.6px;font-size:20.8px;font-weight:700;color:#222;transform:scaleX(0.8984);">Name</span>
<span class="t" style="left:1954.0px;top:617.8px;font-size:20.5px;color:#3a3a3a;transform:scaleX(0.9363);">Frotcom International, Lda.</span>
<span class="t" style="left:1810.4px;top:653.4px;font-size:20.8px;font-weight:700;color:#222;transform:scaleX(0.8739);">Product name</span>
<span class="t" style="left:1954.0px;top:653.6px;font-size:20.5px;color:#3a3a3a;transform:scaleX(0.9313);">Driver app &gt; Electronic logbooks</span>
<span class="t" style="left:1810.4px;top:688.2px;font-size:20.8px;font-weight:700;color:#222;transform:scaleX(0.8810);">Version</span>
<span class="t" style="left:1954.0px;top:688.4px;font-size:20.5px;color:#3a3a3a;transform:scaleX(0.9427);">v1.8.5-2582-release</span>
<span class="t" style="left:94.7px;top:783.8px;font-size:16.8px;-webkit-text-stroke:0.5px #555;color:#555;transform:scaleX(1.0274);">0</span>
<span class="t" style="left:191.4px;top:783.8px;font-size:16.8px;-webkit-text-stroke:0.5px #555;color:#555;transform:scaleX(1.0274);">1</span>
<span class="t" style="left:288.0px;top:783.8px;font-size:16.8px;-webkit-text-stroke:0.5px #555;color:#555;transform:scaleX(1.0274);">2</span>
<span class="t" style="left:384.7px;top:783.8px;font-size:16.8px;-webkit-text-stroke:0.5px #555;color:#555;transform:scaleX(1.0274);">3</span>
<span class="t" style="left:481.3px;top:783.8px;font-size:16.8px;-webkit-text-stroke:0.5px #555;color:#555;transform:scaleX(1.0274);">4</span>
<span class="t" style="left:578.0px;top:783.8px;font-size:16.8px;-webkit-text-stroke:0.5px #555;color:#555;transform:scaleX(1.0274);">5</span>
<span class="t" style="left:674.7px;top:783.8px;font-size:16.8px;-webkit-text-stroke:0.5px #555;color:#555;transform:scaleX(1.0274);">6</span>
<span class="t" style="left:771.3px;top:783.8px;font-size:16.8px;-webkit-text-stroke:0.5px #555;color:#555;transform:scaleX(1.0274);">7</span>
<span class="t" style="left:868.0px;top:783.8px;font-size:16.8px;-webkit-text-stroke:0.5px #555;color:#555;transform:scaleX(1.0274);">8</span>
<span class="t" style="left:964.6px;top:783.8px;font-size:16.8px;-webkit-text-stroke:0.5px #555;color:#555;transform:scaleX(1.0274);">9</span>
<span class="t" style="left:1056.5px;top:783.8px;font-size:16.8px;-webkit-text-stroke:0.5px #555;color:#555;transform:scaleX(1.0283);">10</span>
<span class="t" style="left:1153.1px;top:783.8px;font-size:16.8px;-webkit-text-stroke:0.5px #555;color:#555;transform:scaleX(1.1021);">11</span>
<span class="t" style="left:1249.8px;top:783.8px;font-size:16.8px;-webkit-text-stroke:0.5px #555;color:#555;transform:scaleX(1.0283);">12</span>
<span class="t" style="left:1346.5px;top:783.8px;font-size:16.8px;-webkit-text-stroke:0.5px #555;color:#555;transform:scaleX(1.0283);">13</span>
<span class="t" style="left:1443.1px;top:783.8px;font-size:16.8px;-webkit-text-stroke:0.5px #555;color:#555;transform:scaleX(1.0283);">14</span>
<span class="t" style="left:1539.8px;top:783.8px;font-size:16.8px;-webkit-text-stroke:0.5px #555;color:#555;transform:scaleX(1.0283);">15</span>
<span class="t" style="left:1636.4px;top:783.8px;font-size:16.8px;-webkit-text-stroke:0.5px #555;color:#555;transform:scaleX(1.0283);">16</span>
<span class="t" style="left:1733.1px;top:783.8px;font-size:16.8px;-webkit-text-stroke:0.5px #555;color:#555;transform:scaleX(1.0283);">17</span>
<span class="t" style="left:1829.8px;top:783.8px;font-size:16.8px;-webkit-text-stroke:0.5px #555;color:#555;transform:scaleX(1.0283);">18</span>
<span class="t" style="left:1926.4px;top:783.8px;font-size:16.8px;-webkit-text-stroke:0.5px #555;color:#555;transform:scaleX(1.0283);">19</span>
<span class="t" style="left:2023.1px;top:783.8px;font-size:16.8px;-webkit-text-stroke:0.5px #555;color:#555;transform:scaleX(1.0283);">20</span>
<span class="t" style="left:2119.7px;top:783.8px;font-size:16.8px;-webkit-text-stroke:0.5px #555;color:#555;transform:scaleX(1.0283);">21</span>
<span class="t" style="left:2216.4px;top:783.8px;font-size:16.8px;-webkit-text-stroke:0.5px #555;color:#555;transform:scaleX(1.0283);">22</span>
<span class="t" style="left:2313.0px;top:783.8px;font-size:16.8px;-webkit-text-stroke:0.5px #555;color:#555;transform:scaleX(1.0283);">23</span>
<span class="t" style="left:2398.3px;top:783.8px;font-size:16.8px;-webkit-text-stroke:0.5px #555;color:#555;transform:scaleX(1.0283);">24</span>
<span class="t" style="left:2442.8px;top:831.5px;font-size:24.5px;-webkit-text-stroke:0.3px #222;color:#222;transform:scaleX(0.9329);">16:07</span>
<span class="t" style="left:2442.8px;top:891.0px;font-size:24.5px;-webkit-text-stroke:0.3px #222;color:#222;transform:scaleX(0.9329);">03:49</span>
<span class="t" style="left:2442.8px;top:951.1px;font-size:24.5px;-webkit-text-stroke:0.3px #222;color:#222;transform:scaleX(0.9329);">04:03</span>
<span class="t" style="left:2442.8px;top:1010.9px;font-size:24.5px;-webkit-text-stroke:0.3px #222;color:#222;transform:scaleX(0.9329);">00:00</span>
<span class="t" style="left:2442.8px;top:1070.7px;font-size:24.5px;-webkit-text-stroke:0.3px #222;color:#222;transform:scaleX(0.9329);">00:00</span>
<span class="t" style="left:2442.8px;top:1118.8px;font-size:24.5px;-webkit-text-stroke:0.3px #222;color:#222;transform:scaleX(0.9329);">24:00</span>
<span class="t" style="left:25.0px;top:1194.3px;font-size:20.5px;font-weight:700;color:#fff;transform:scaleX(0.8821);">EVENT</span>
<span class="t" style="left:387.6px;top:1194.3px;font-size:20.5px;font-weight:700;color:#fff;transform:scaleX(0.8442);">START</span>
<span class="t" style="left:856.4px;top:1194.3px;font-size:20.5px;font-weight:700;color:#fff;transform:scaleX(0.9178);">DURATION</span>
<span class="t" style="left:1255.2px;top:1194.3px;font-size:20.5px;font-weight:700;color:#fff;transform:scaleX(0.8955);">LOCATION</span>
<span class="t" style="left:1763.9px;top:1194.3px;font-size:20.5px;font-weight:700;color:#fff;transform:scaleX(0.8654);">VEHICLE</span>
<span class="t" style="left:2146.2px;top:1194.3px;font-size:20.5px;font-weight:700;color:#fff;transform:scaleX(0.8637);">NOTES</span>
<span class="t" style="left:33.8px;top:1234.9px;font-size:14.6px;-webkit-text-stroke:0.3px #fff;color:#fff;transform:scaleX(0.9511);">Breaks or rest</span>
<span class="t" style="left:387.6px;top:1234.1px;font-size:20.5px;color:#333;transform:scaleX(0.9471);">00:00</span>
<span class="t" style="left:856.4px;top:1234.1px;font-size:20.5px;color:#333;transform:scaleX(0.9335);">04:38</span>
<span class="t" style="left:1255.2px;top:1234.1px;font-size:20.5px;color:#333;transform:scaleX(0.8976);">Santo António dos Cavaleiros</span>
<span class="t" style="left:1766.0px;top:1232.4px;font-size:20.5px;color:#3a3a3a;transform:scaleX(0.8521);">XX-00-LL</span>
<span class="t" style="left:33.8px;top:1271.9px;font-size:14.6px;-webkit-text-stroke:0.3px #fff;color:#fff;transform:scaleX(1.0074);">Other work</span>
<span class="t" style="left:387.6px;top:1271.9px;font-size:20.5px;color:#333;transform:scaleX(0.9471);">04:38</span>
<span class="t" style="left:856.4px;top:1271.9px;font-size:20.5px;color:#333;transform:scaleX(0.9335);">00:14</span>
<span class="t" style="left:1255.2px;top:1271.9px;font-size:20.5px;color:#333;transform:scaleX(0.8755);">Lisboa</span>
<span class="t" style="left:1767.8px;top:1268.3px;font-size:20.5px;color:#3a3a3a;transform:scaleX(0.8521);">XX-00-LL</span>
<span class="t" style="left:33.8px;top:1309.6px;font-size:14.6px;-webkit-text-stroke:0.3px #fff;color:#fff;transform:scaleX(0.9877);">Driving time</span>
<span class="t" style="left:387.6px;top:1308.8px;font-size:20.5px;color:#333;transform:scaleX(0.9471);">04:53</span>
<span class="t" style="left:856.4px;top:1308.8px;font-size:20.5px;color:#333;transform:scaleX(0.9335);">00:14</span>
<span class="t" style="left:1255.2px;top:1308.8px;font-size:20.5px;color:#333;transform:scaleX(0.8755);">Lisboa</span>
<span class="t" style="left:1767.8px;top:1305.3px;font-size:20.5px;color:#3a3a3a;transform:scaleX(0.8521);">XX-00-LL</span>
<span class="t" style="left:33.8px;top:1346.8px;font-size:14.6px;-webkit-text-stroke:0.3px #fff;color:#fff;transform:scaleX(1.0074);">Other work</span>
<span class="t" style="left:387.6px;top:1346.5px;font-size:20.5px;color:#333;transform:scaleX(0.9471);">05:07</span>
<span class="t" style="left:856.4px;top:1346.5px;font-size:20.5px;color:#333;transform:scaleX(0.9335);">00:05</span>
<span class="t" style="left:1255.2px;top:1346.5px;font-size:20.5px;color:#333;transform:scaleX(0.8755);">Lisboa</span>
<span class="t" style="left:1769.2px;top:1344.1px;font-size:20.5px;color:#3a3a3a;transform:scaleX(0.8521);">XX-00-LL</span>
</body></html>
